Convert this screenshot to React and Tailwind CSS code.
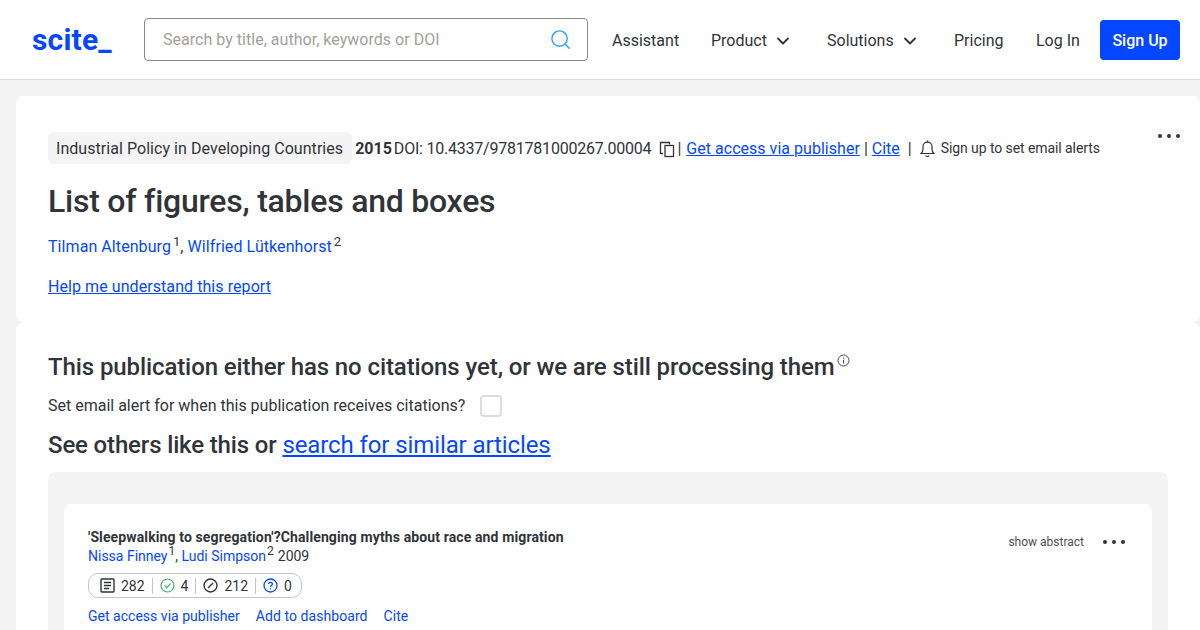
import { ChevronDown, Search } from 'lucide-react'

const font = "font-['Roboto','Liberation_Sans',sans-serif]"

function Dots({ className }) {
  return (
    <div className={`flex items-center gap-[5px] ${className}`}>
      <span className="w-1 h-1 rounded-full bg-[#303439]" />
      <span className="w-1 h-1 rounded-full bg-[#303439]" />
      <span className="w-1 h-1 rounded-full bg-[#303439]" />
    </div>
  )
}

function Header() {
  return (
    <header className="h-20 shrink-0 bg-white border-b border-[#dcdcdc] flex items-center pl-8 pr-5">
      <div className="w-[112px] text-[#0447ff] text-[30px] font-bold tracking-[0.2px] leading-none">scite_</div>
      <div className="w-[444px] h-[43px] border border-[#8a8a8a] rounded flex items-center justify-between pl-[18px] pr-[15px] -mt-[1px]">
        <span className="text-[#a3a09c] text-base tracking-[0.025px] pt-[2px]">Search by title, author, keywords or DOI</span>
        <Search className="w-[23px] h-[23px] text-[#2aa6f5]" strokeWidth={1.5} />
      </div>
      <nav className="flex items-center text-[#303439] text-base ml-[24px] flex-1">
        <span className="w-[99px] pt-[2px]">Assistant</span>
        <span className="w-[116px] flex items-center pt-[2px]">Product<ChevronDown className="w-5 h-5 ml-[6px]" strokeWidth={2.2} /></span>
        <span className="w-[127px] flex items-center pt-[2px]">Solutions<ChevronDown className="w-5 h-5 ml-[6px]" strokeWidth={2.2} /></span>
        <span className="w-[82px] pt-[2px]">Pricing</span>
        <span className="pt-[2px]">Log In</span>
        <button className="ml-auto w-[80px] h-10 bg-[#0447ff] text-white rounded font-medium pt-[2px]">Sign Up</button>
      </nav>
    </header>
  )
}

function CopyIcon() {
  return (
    <svg width="17" height="17" viewBox="0 0 17 17" fill="none" stroke="#303439" strokeWidth="1.3" className="ml-2">
      <path d="M4 12.5H1.5V1.5H10.5V3.5" />
      <rect x="6" y="4.5" width="8.5" height="11" />
    </svg>
  )
}

function BellIcon() {
  return (
    <svg width="15" height="18" viewBox="0 0 15 18" fill="none" stroke="#303439" strokeWidth="1.2" className="ml-2">
      <path d="M1 13.5C2.5 12.5 3 11.5 3 9V6.5C3 4 5 2.2 7.5 2.2C10 2.2 12 4 12 6.5V9C12 11.5 12.5 12.5 14 13.5H1Z" />
      <path d="M7.5 0.5V2.2M5.8 15.5C6.2 16.8 8.8 16.8 9.2 15.5" />
    </svg>
  )
}

function PublicationCard() {
  return (
    <section className="bg-white rounded-lg pl-8 h-[226px] shrink-0 relative">
      <div className="flex items-center pt-9 text-[#303439] text-base whitespace-nowrap">
        <span className="bg-[#f4f4f4] rounded-md h-8 pl-2 pr-[9px] pt-[2px] flex items-center mr-[3px] tracking-[0.05px]">Industrial Policy in Developing Countries</span>
        <div className="flex items-center pt-[2px]">
          <b className="font-bold">2015</b>
          <span className="ml-[2px] tracking-[-0.22px]">DOI: 10.4337/9781781000267.00004</span>
          <CopyIcon />
          <span className="ml-px">|</span>
          <a className="ml-[5px] text-[#0447ff] underline tracking-[0.03px]">Get access via publisher</a>
          <span className="ml-1">|</span>
          <a className="ml-1 text-[#0447ff] underline">Cite</a>
          <span className="ml-2">|</span>
          <BellIcon />
          <span className="ml-[6px] -mt-[2px] text-sm tracking-[-0.08px]">Sign up to set email alerts</span>
        </div>
      </div>
      <Dots className="absolute right-[20px] top-[38px]" />
      <h1 className="mt-[18px] text-[32px] leading-[38px] font-medium text-[#303439] tracking-[-0.23px]">List of figures, tables and boxes</h1>
      <p className="mt-[15px] text-base leading-6 text-[#0447ff] tracking-[0.07px]">
        Tilman Altenburg<sup className="text-[#303439] text-[13px] ml-0.5">1</sup><span className="text-[#303439]">, </span>Wilfried Lütkenhorst<sup className="text-[#303439] text-[13px] ml-0.5">2</sup>
      </p>
      <a className="block mt-4 text-base leading-6 text-[#0447ff] underline tracking-[0.07px]">Help me understand this report</a>
    </section>
  )
}

function ResultCard() {
  return (
    <div className="bg-white rounded-lg mt-8 ml-4 mr-4 h-[200px] px-6 pt-6 relative text-[#303439]">
      <div className="text-sm leading-[18px] font-bold tracking-[0.12px]">'Sleepwalking to segregation'?Challenging myths about race and migration</div>
      <div className="text-sm leading-[20px] text-[#0447ff]">
        Nissa Finney<sup className="text-[#303439] text-xs ml-px">1</sup><span className="text-[#303439]">, </span>Ludi Simpson<sup className="text-[#303439] text-xs ml-px">2</sup>
        <span className="text-[#303439] ml-1">2009</span>
      </div>
      <div className="mt-[7px] w-[214px] h-[25px] border border-[#c4c4c4] rounded-[10px] flex items-center pl-[11px] text-sm">
        <svg width="15" height="15" viewBox="0 0 15 15" fill="none" stroke="#303439" strokeWidth="1.4">
          <rect x="1" y="1" width="13" height="13" rx="1" />
          <path d="M4 4.5H11M4 7.5H11M4 10.5H9" />
        </svg>
        <span className="ml-[6px]">282</span>
        <span className="mx-[7px] h-4 w-px bg-[#c4c4c4]" />
        <svg width="15" height="15" viewBox="0 0 15 15" fill="none" stroke="#4caf7a" strokeWidth="1.2">
          <circle cx="7.5" cy="7.5" r="6.5" />
          <path d="M4.5 7.5L6.8 9.8L10.5 5.5" />
        </svg>
        <span className="ml-[6px]">4</span>
        <span className="mx-[7px] h-4 w-px bg-[#c4c4c4]" />
        <svg width="15" height="15" viewBox="0 0 15 15" fill="none" stroke="#303439" strokeWidth="1.4">
          <circle cx="7.5" cy="7.5" r="6.5" />
          <path d="M5 10L10 5" />
        </svg>
        <span className="ml-[6px]">212</span>
        <span className="mx-[7px] h-4 w-px bg-[#c4c4c4]" />
        <svg width="15" height="15" viewBox="0 0 15 15" fill="none" stroke="#0447ff" strokeWidth="1.3">
          <circle cx="7.5" cy="7.5" r="6.5" />
          <path d="M5.6 6C5.6 3.8 9.4 3.8 9.4 6C9.4 7.4 7.5 7.3 7.5 8.8M7.5 10.2V11.2" />
        </svg>
        <span className="ml-[6px]">0</span>
      </div>
      <div className="mt-2 flex gap-4 text-sm text-[#0447ff] tracking-[0.02px]">
        <a>Get access via publisher</a>
        <a className="tracking-[0.07px]">Add to dashboard</a>
        <a>Cite</a>
      </div>
      <span className="absolute right-[68px] top-[30px] text-xs text-[#4a5058]">show abstract</span>
      <Dots className="absolute right-[27px] top-[36px]" />
    </div>
  )
}

function CitationsCard() {
  return (
    <section className="bg-white rounded-lg pl-8 pr-8 pt-[28px] flex-1">
      <h2 className="text-2xl leading-[34px] font-medium text-[#303439] tracking-[-0.1px]">
        This publication either has no citations yet, or we are still processing them
        <svg width="13" height="13" viewBox="0 0 13 13" fill="none" stroke="#303439" strokeWidth="0.9" className="inline-block ml-[2px] align-[8px]">
          <circle cx="6.5" cy="6.5" r="5.5" />
          <path d="M6.5 5.8V9.5M6.5 3.6V4.6" />
        </svg>
      </h2>
      <div className="mt-[5px] flex items-center text-base text-[#303439] h-[34px]">
        Set email alert for when this publication receives citations?
        <span className="ml-[15px] w-[22px] h-[22px] border-2 border-[#dcdcd8] rounded" />
      </div>
      <h2 className="mt-[5px] text-2xl leading-[34px] font-medium text-[#303439] tracking-[-0.15px]">
        See others like this or <a className="font-normal text-[#0447ff] underline tracking-[-0.1px]">search for similar articles</a>
      </h2>
      <div className="mt-[10px] bg-[#f4f4f4] rounded-lg h-[300px] overflow-hidden">
        <ResultCard />
      </div>
    </section>
  )
}

export default function App() {
  return (
    <div className={`w-[1200px] h-[630px] overflow-hidden bg-[#f4f4f4] flex flex-col ${font}`}>
      <Header />
      <main className="flex-1 min-h-0 pt-4 pl-4 flex flex-col">
        <PublicationCard />
        <CitationsCard />
      </main>
    </div>
  )
}
